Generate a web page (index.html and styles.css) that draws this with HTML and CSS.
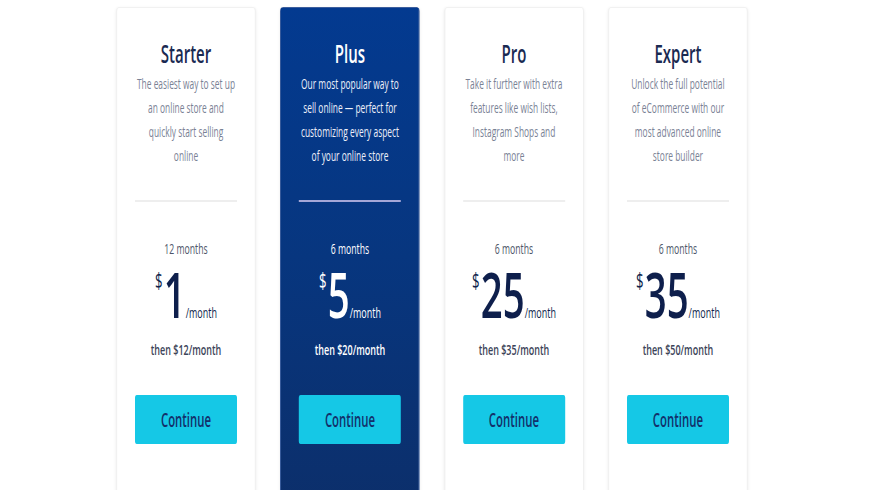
FILE: index.html
```html
<!DOCTYPE html>
<html lang="en">
<head>
<meta charset="utf-8">
<title>Plans</title>
<link rel="stylesheet" href="styles.css">
</head>
<body>
<div class="stage">
  <div class="plans">
    <div class="card">
      <h2 class="title">Starter</h2>
      <p class="desc">The easiest way to set up<br>an online store and<br>quickly start selling<br>online</p>
      <hr class="rule">
      <div class="term">12 months</div>
      <div class="price"><span class="cur">$</span><span class="amt">1</span><span class="per">/month</span></div>
      <div class="then">then $12/month</div>
      <button class="btn">Continue</button>
    </div>
    <div class="card card-featured">
      <h2 class="title">Plus</h2>
      <p class="desc">Our most popular way to<br>sell online — perfect for<br>customizing every aspect<br>of your online store</p>
      <hr class="rule">
      <div class="term">6 months</div>
      <div class="price"><span class="cur">$</span><span class="amt">5</span><span class="per">/month</span></div>
      <div class="then">then $20/month</div>
      <button class="btn">Continue</button>
    </div>
    <div class="card">
      <h2 class="title">Pro</h2>
      <p class="desc">Take it further with extra<br>features like wish lists,<br>Instagram Shops and<br>more</p>
      <hr class="rule">
      <div class="term">6 months</div>
      <div class="price"><span class="cur">$</span><span class="amt">25</span><span class="per">/month</span></div>
      <div class="then">then $35/month</div>
      <button class="btn">Continue</button>
    </div>
    <div class="card">
      <h2 class="title">Expert</h2>
      <p class="desc">Unlock the full potential<br>of eCommerce with our<br>most advanced online<br>store builder</p>
      <hr class="rule">
      <div class="term">6 months</div>
      <div class="price"><span class="cur">$</span><span class="amt">35</span><span class="per">/month</span></div>
      <div class="then">then $50/month</div>
      <button class="btn">Continue</button>
    </div>
  </div>
</div>
</body>
</html>
```
FILE: styles.css
```css
html, body {
  margin: 0;
  padding: 0;
  background: #ffffff;
  overflow: hidden;
  height: 490px;
}

.stage {
  width: 1467px;
  transform: scaleX(0.6);
  transform-origin: 0 0;
  font-family: "Open Sans", "Noto Sans", sans-serif;
}

.plans {
  display: flex;
  gap: 41.3px;
  padding: 7px 0 0 194px;
}

.card {
  flex: none;
  width: 232px;
  height: 500px;
  box-sizing: border-box;
  padding: 30px 30px 0;
  background: #ffffff;
  border: 1px solid #ededed;
  border-radius: 4px;
  box-shadow: 0 1px 4px rgba(0, 0, 0, 0.08);
  display: flex;
  flex-direction: column;
  align-items: center;
  text-align: center;
  color: #1a2a52;
}

.card-featured {
  background: linear-gradient(180deg, #033a90 0%, #07367f 50%, #0c2f6b 100%);
  border-color: #0a3584;
  color: #ffffff;
}

.title {
  margin: 0 0 4px;
  font-size: 25px;
  line-height: 30px;
  font-weight: 600;
}

.desc {
  margin: 0;
  height: 96px;
  font-size: 14px;
  line-height: 24px;
  color: #7a8295;
  white-space: nowrap;
}

.card-featured .desc {
  color: #eef0fa;
}

.rule {
  width: 100%;
  height: 2px;
  margin: 32px 0 0;
  border: 0;
  background: #eeeeee;
}

.card-featured .rule {
  background: #a4a7d8;
}

.term {
  margin-top: 37px;
  font-size: 14.5px;
  line-height: 20px;
  color: #4e5669;
}

.card-featured .term {
  color: #ffffff;
}

.price {
  margin-top: 3px;
  height: 64px;
  font-size: 64px;
  line-height: 64px;
  font-weight: 600;
  color: #0e1f4c;
  white-space: nowrap;
}

.card-featured .price {
  color: #ffffff;
}

.cur {
  display: inline-block;
  vertical-align: top;
  padding-top: 6px;
  margin-right: 2px;
  font-size: 22px;
  line-height: 22px;
  font-weight: 500;
}

.per {
  margin-left: 0;
  font-size: 15px;
  font-weight: 400;
}

.then {
  margin-top: 13px;
  font-size: 15px;
  line-height: 20px;
  font-weight: 600;
  color: #3b4358;
}

.card-featured .then {
  color: #ffffff;
}

.btn {
  margin-top: 36px;
  width: 100%;
  height: 49px;
  border: 0;
  border-radius: 3px;
  background: #15c8e6;
  color: #13306a;
  font-family: inherit;
  font-size: 19px;
  font-weight: 600;
  cursor: pointer;
}
```
